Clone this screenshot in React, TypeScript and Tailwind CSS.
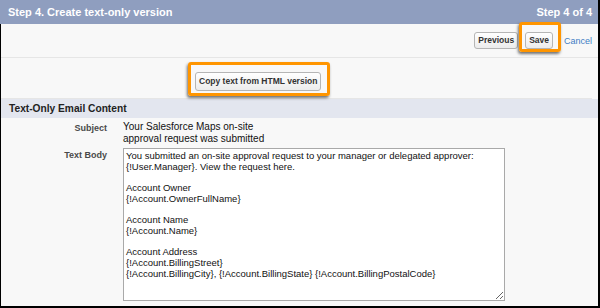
const body = `You submitted an on-site approval request to your manager or delegated approver:
{!User.Manager}. View the request here.

Account Owner
{!Account.OwnerFullName}

Account Name
{!Account.Name}

Account Address
{!Account.BillingStreet}
{!Account.BillingCity}, {!Account.BillingState} {!Account.BillingPostalCode}`;

function Btn({ label }: { label: string }) {
  return (
    <button className="block h-[17px] rounded-[3px] border border-[#b5b5b5] bg-gradient-to-b from-white to-[#ececec] px-[3px] text-[8.5px] font-bold leading-none text-[#333]">
      {label}
    </button>
  );
}

function Highlight({ children, className }: { children: React.ReactNode; className: string }) {
  return (
    <div className="relative flex">
      {children}
      <div
        className={`pointer-events-none absolute rounded-[3px] border-[3px] border-[#ff9500] shadow-[-1px_2px_3px_rgba(0,0,0,0.55)] ${className}`}
      />
    </div>
  );
}

export default function App() {
  return (
    <div
      className="flex h-[308px] w-[600px] flex-col border-r-2 border-b-2 border-black bg-[#f8f8f8]"
      style={{ fontFamily: '"Liberation Sans", Arial, sans-serif' }}
    >
      <div className="flex h-[24px] shrink-0 items-center justify-between bg-[#8f9ebf] px-[8px] text-[11px] font-bold text-white">
        <span>Step 4. Create text-only version</span>
        <span className="mr-[-2px]">Step 4 of 4</span>
      </div>
      <div className="flex flex-1 flex-col border-l border-black">
        <div className="flex h-[34px] shrink-0 items-start justify-end border-b border-[#e6e6e6] pt-[8px] pr-[6px]">
          <Btn label="Previous" />
          <div className="ml-[7px] flex">
            <Highlight className="-top-[10px] -right-[8px] -bottom-[3px] -left-[6px]">
              <Btn label="Save" />
            </Highlight>
          </div>
          <a className="ml-[11px] mt-[3px] text-[9px] text-[#3f7dc5]">Cancel</a>
        </div>
        <div className="mr-[6px] flex h-[41px] shrink-0 items-start border-b border-[#e6e6e6] pt-[14px] pl-[194px]">
          <Highlight className="-top-[10px] -right-[9px] -bottom-[5px] -left-[7px]">
            <button className="block h-[19px] rounded-[3px] border border-[#b5b5b5] bg-gradient-to-b from-white to-[#ececec] px-[3px] text-[8.5px] font-bold leading-none text-[#333]">
              Copy text from HTML version
            </button>
          </Highlight>
        </div>
        <div className="flex h-[19px] shrink-0 items-center bg-[#e3e6ef] pl-[8px] text-[10.2px] font-bold text-[#222]">
          Text-Only Email Content
        </div>
        <div className="flex pt-[3px]">
          <div className="w-[106px] shrink-0 pt-[1px] text-right text-[9px] font-bold text-[#4a4a4a]">Subject</div>
          <div className="ml-[16px] text-[10px] leading-[12px] text-[#111]">
            Your Salesforce Maps on-site
            <br />
            approval request was submitted
          </div>
        </div>
        <div className="flex items-start pt-[3px]">
          <div className="w-[106px] shrink-0 pt-[1px] text-right text-[9px] font-bold text-[#4a4a4a]">Text Body</div>
          <textarea
            readOnly
            defaultValue={body}
            className="ml-[16px] block h-[153px] w-[382px] resize border border-[#a9a9a9] bg-white px-[2px] py-[2px] text-[9.5px] leading-[10.7px] text-[#111] outline-none"
            style={{ fontFamily: '"Liberation Sans", Arial, sans-serif' }}
          />
        </div>
      </div>
    </div>
  );
}
